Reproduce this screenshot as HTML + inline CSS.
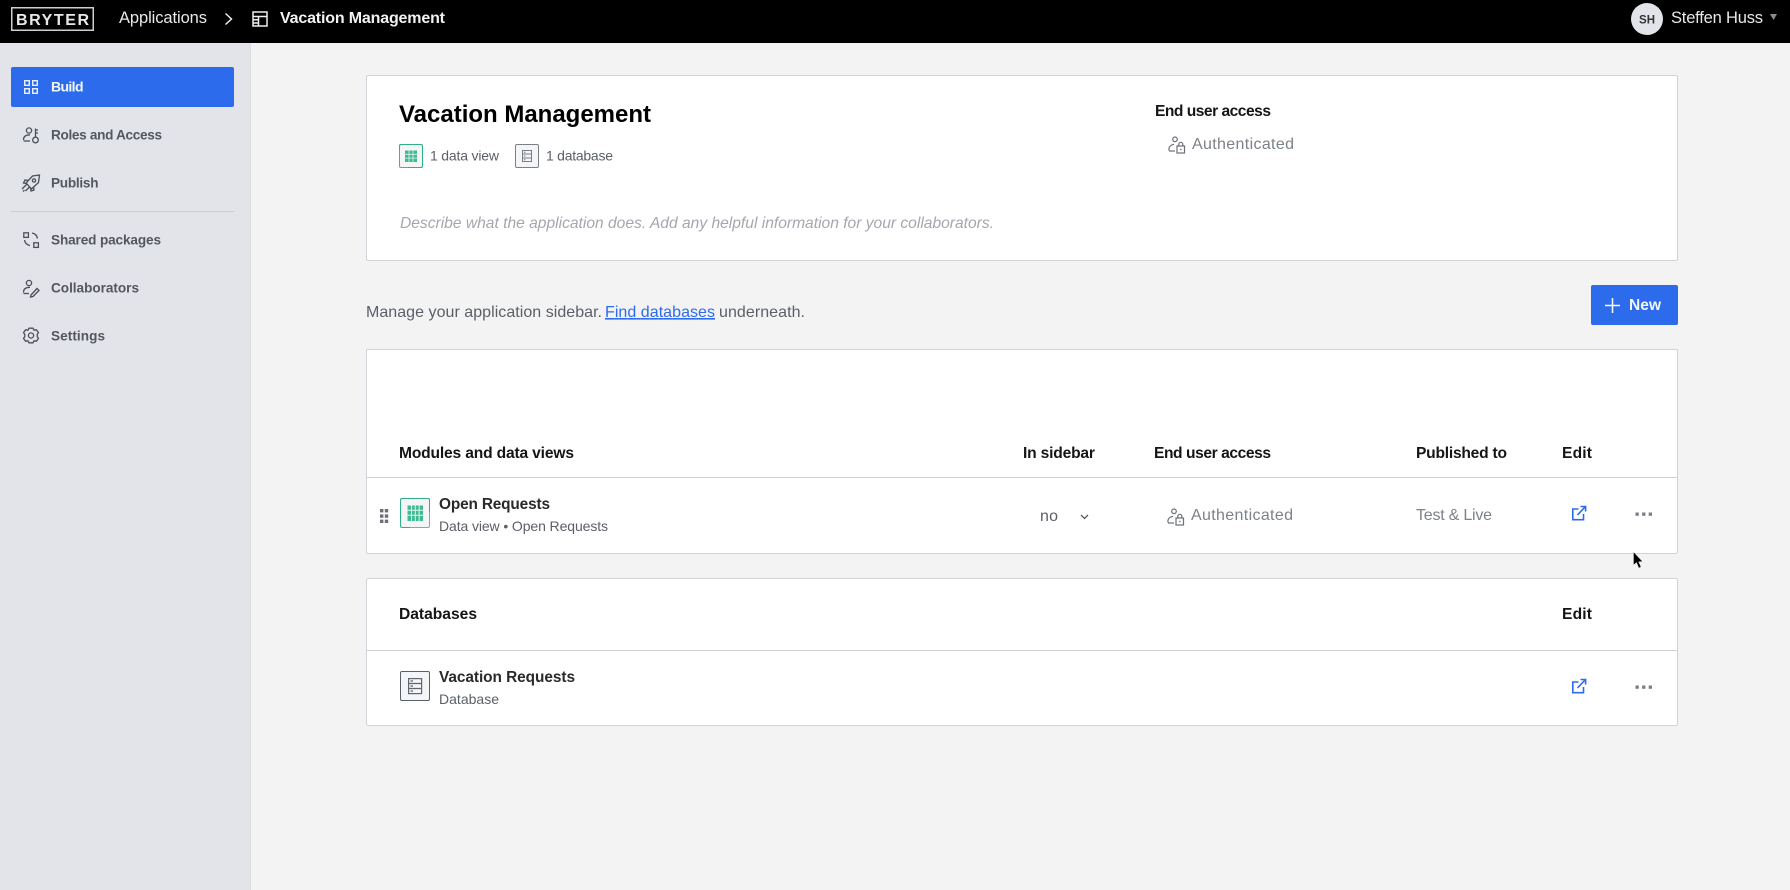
<!DOCTYPE html>
<html lang="en">
<head>
<meta charset="utf-8">
<title>Vacation Management</title>
<style>
html,body{margin:0;padding:0;width:1790px;height:890px;overflow:hidden;background:#f3f3f4}
svg{display:block;position:absolute;left:0;top:0}
text{font-family:"Liberation Sans",sans-serif;white-space:pre}
.b{font-weight:700}
.nav{font-size:13.6px;font-weight:700;fill:#53575f}
.h{font-size:15.6px;font-weight:700;fill:#151515}
.n{font-size:15.4px;font-weight:700;fill:#2a2a2a}
.s{font-size:14px;fill:#5b5f67}
.g{font-size:16px;fill:#7d8189}
.i{fill:none;stroke:#4b4f58;stroke-width:1.3}
.o{fill:none;stroke:#6b6f78;stroke-width:1.2}
.bl{fill:none;stroke:#2d6bed;stroke-width:1.6}
</style>
</head>
<body>
<svg width="1790" height="890" viewBox="0 0 1790 890" xmlns="http://www.w3.org/2000/svg">
  <defs>
    <g id="auth">
      <circle cx="7" cy="2.8" r="2.3" class="o"/>
      <path d="M1 14 C0.5 11 2 8.5 6 7.8" class="o"/>
      <path d="M1 14.5 H7" class="o"/>
      <rect x="9" y="9.5" width="7.5" height="7" class="o"/>
      <path d="M10.8 9.5 V7.8 a2 2 0 0 1 4 0 V9.5" class="o"/>
      <rect x="12.2" y="12.3" width="1.4" height="1.4" fill="#6b6f78"/>
    </g>
    <g id="ext">
      <path d="M6.5 3.5 H0.8 V14.2 H11.5 V8.5" class="bl"/>
      <path d="M5.5 9.5 L13 1.5 M8.5 1 H13.6 V6" class="bl"/>
    </g>
    <g id="dots">
      <rect x="0" y="0" width="3.3" height="3.3" fill="#7a7e86"/>
      <rect x="6.6" y="0" width="3.3" height="3.3" fill="#7a7e86"/>
      <rect x="13.2" y="0" width="3.3" height="3.3" fill="#7a7e86"/>
    </g>
  </defs>

  <!-- backgrounds -->
  <rect width="1790" height="890" fill="#f3f3f4"/>
  <rect x="0" y="43" width="250" height="847" fill="#e2e4e9"/>
  <rect x="250" y="43" width="1" height="847" fill="#dcdee2"/>
  <rect width="1790" height="43" fill="#000"/>

  <!-- top bar -->
  <rect x="11.75" y="7.75" width="81.5" height="22.5" fill="none" stroke="#cfcfcf" stroke-width="1.5"/>
  <text x="16" y="25" class="b" font-size="16" fill="#e8e8e8" textLength="73" lengthAdjust="spacing">BRYTER</text>
  <text x="119" y="23" font-size="16.5" fill="#e8e8e8" textLength="88" lengthAdjust="spacing">Applications</text>
  <path d="M225.5 13.5 L231.5 19 L225.5 24.5" fill="none" stroke="#eee" stroke-width="1.5"/>
  <g fill="none" stroke="#eee" stroke-width="1.5">
    <rect x="253" y="12" width="14" height="14"/>
    <path d="M253 16.5 H267 M258.5 16.5 V26 M253 19.7 H258.5 M253 23 H258.5"/>
  </g>
  <text x="280" y="23" class="b" font-size="16" fill="#f2f2f2" textLength="165" lengthAdjust="spacing">Vacation Management</text>
  <ellipse cx="1647" cy="19" rx="16" ry="16" fill="#e2e4e9"/>
  <text x="1639" y="23.5" class="b" font-size="11.5" fill="#333" textLength="16" lengthAdjust="spacing">SH</text>
  <text x="1671" y="23" font-size="16.5" fill="#e8e8e8" textLength="92" lengthAdjust="spacing">Steffen Huss</text>
  <path d="M1770 14 H1777 L1773.5 20 Z" fill="#8a8a8a"/>

  <!-- sidebar -->
  <rect x="11" y="67" width="223" height="40" rx="2" fill="#2d6bed"/>
  <g fill="none" stroke="#e8efff" stroke-width="1.4">
    <rect x="24.7" y="80.7" width="4.6" height="4.6"/>
    <rect x="32.7" y="80.7" width="4.6" height="4.6"/>
    <rect x="24.7" y="88.7" width="4.6" height="4.6"/>
    <rect x="32.7" y="88.7" width="4.6" height="4.6"/>
  </g>
  <text x="51" y="91.5" class="b" font-size="14" fill="#f2f6ff" textLength="32.5" lengthAdjust="spacing">Build</text>

  <g class="i">
    <circle cx="29" cy="130.5" r="2.6"/>
    <path d="M23.5 140 C23.5 136.5 26 134.8 30 134.8"/>
    <path d="M23.5 141 H30"/>
    <circle cx="35.5" cy="140" r="2.8"/>
    <path d="M35.5 137 V128.5 M35.5 130 H38 M35.5 133 H38"/>
  </g>
  <text x="51" y="139.5" class="nav" textLength="111" lengthAdjust="spacing">Roles and Access</text>

  <g class="i">
    <path d="M39.5 175 L32.5 176 L26 183 L31.5 189 L38.5 182.5 Z"/>
    <path d="M28.5 180.5 L25 180 L23.5 183 L26.5 183.5 M33.5 186.5 L34 190 L31 191 L30.5 188"/>
    <circle cx="34" cy="180.5" r="1.6"/>
    <path d="M22 189 L27 184 M25.5 191 L30 186.5 M23 191.5 L24.5 190"/>
  </g>
  <text x="51" y="187.5" class="nav" textLength="47.5" lengthAdjust="spacing">Publish</text>

  <rect x="11" y="211" width="223" height="1" fill="#ccced4"/>

  <g class="i">
    <rect x="23.8" y="232.8" width="4.6" height="4.6"/>
    <rect x="33.8" y="242.8" width="4.6" height="4.6"/>
    <path d="M32 233 C35 233.5 37 235.5 37.5 238.5 M24.5 240 C25 243 27 245 30 245.5"/>
  </g>
  <text x="51" y="244.5" class="nav" textLength="110" lengthAdjust="spacing">Shared packages</text>

  <g class="i">
    <circle cx="29" cy="283" r="2.6"/>
    <path d="M23.5 292.5 C23.5 289 26 287.3 30 287.3"/>
    <path d="M23.5 293.5 H29"/>
    <path d="M31 295 L37 288.5 L39 290.5 L33 296.5 L30.5 297 Z"/>
  </g>
  <text x="51" y="292.5" class="nav" textLength="88" lengthAdjust="spacing">Collaborators</text>

  <g class="i">
    <circle cx="31" cy="335.5" r="2.6"/>
    <path d="M29 328.2 L33 328.2 L34 330.2 L36.4 329.8 L38.5 332.6 L37.2 334.4 L37.2 336.6 L38.5 338.4 L36.4 341.2 L34 340.8 L33 342.8 L29 342.8 L28 340.8 L25.6 341.2 L23.5 338.4 L24.8 336.6 L24.8 334.4 L23.5 332.6 L25.6 329.8 L28 330.2 Z" stroke-linejoin="round"/>
  </g>
  <text x="51" y="340.5" class="nav" textLength="54" lengthAdjust="spacing">Settings</text>

  <!-- card 1 -->
  <rect x="366.5" y="75.5" width="1311" height="185" rx="1.5" fill="#fff" stroke="#d0d3d8"/>
  <text x="399" y="122" class="b" font-size="24" fill="#000" textLength="252" lengthAdjust="spacing">Vacation Management</text>

  <rect x="399.5" y="144.5" width="23" height="23" rx="1.5" fill="#f3f5f7" stroke="#8a8e96"/>
  <path d="M422.5 146 V166 A1.5 1.5 0 0 1 421 167.5 H408 M399.5 150 V146 A1.5 1.5 0 0 1 401 144.5 H421 A1.5 1.5 0 0 1 422.5 146" fill="none" stroke="#2eb086"/>
  <rect x="405" y="150.5" width="12" height="11.5" fill="#3dba90"/>
  <path d="M409 150.5 V162 M413 150.5 V162 M405 154.3 H417 M405 158.1 H417" stroke="#e0f4ec" stroke-width=".8"/>
  <text x="430" y="160.5" class="s" textLength="69" lengthAdjust="spacing">1 data view</text>

  <rect x="515.5" y="144.5" width="23" height="23" rx="1.5" fill="#f3f5f7" stroke="#7a7e86"/>
  <g fill="none" stroke="#7a7e86" stroke-width="1">
    <rect x="522.5" y="150.5" width="9" height="11"/>
    <path d="M522.5 154 H531.5 M522.5 158 H531.5 M524 152.2 H525.5 M524 156 H525.5 M524 159.8 H525.5"/>
  </g>
  <text x="546" y="160.5" class="s" textLength="67" lengthAdjust="spacing">1 database</text>

  <text x="1155" y="116" class="h" textLength="116" lengthAdjust="spacing">End user access</text>
  <use href="#auth" x="1168" y="136.5"/>
  <text x="1192" y="149" class="g" textLength="102" lengthAdjust="spacing">Authenticated</text>

  <text x="400" y="228" font-size="15.6" font-style="italic" fill="#a3a7ae" textLength="594" lengthAdjust="spacing">Describe what the application does. Add any helpful information for your collaborators.</text>

  <!-- manage row -->
  <text x="366" y="317" font-size="16" fill="#5b5f67" textLength="236" lengthAdjust="spacing">Manage your application sidebar.</text>
  <text x="605" y="317" font-size="16" fill="#2d6bed" text-decoration="underline" textLength="110" lengthAdjust="spacing">Find databases</text>
  <text x="719" y="317" font-size="16" fill="#5b5f67" textLength="86" lengthAdjust="spacing">underneath.</text>

  <rect x="1591" y="285" width="87" height="40" rx="2" fill="#2d6bed"/>
  <path d="M1612.5 298 V313 M1605 305.5 H1620" stroke="#fff" stroke-width="1.5" fill="none"/>
  <text x="1629" y="310" class="b" font-size="15.5" fill="#f2f6ff" textLength="32" lengthAdjust="spacing">New</text>

  <!-- card 2 -->
  <rect x="366.5" y="349.5" width="1311" height="204" rx="1.5" fill="#fff" stroke="#d0d3d8"/>
  <rect x="367" y="477" width="1310" height="1" fill="#d0d3d8"/>
  <text x="399" y="458" class="h" textLength="175" lengthAdjust="spacing">Modules and data views</text>
  <text x="1023" y="458" class="h" textLength="72" lengthAdjust="spacing">In sidebar</text>
  <text x="1154" y="458" class="h" textLength="117" lengthAdjust="spacing">End user access</text>
  <text x="1416" y="458" class="h" textLength="91" lengthAdjust="spacing">Published to</text>
  <text x="1562" y="458" class="h" textLength="30" lengthAdjust="spacing">Edit</text>

  <g fill="#6b6f78">
    <rect x="380" y="509" width="3.4" height="3.4"/><rect x="384.8" y="509" width="3.4" height="3.4"/>
    <rect x="380" y="514.4" width="3.4" height="3.4"/><rect x="384.8" y="514.4" width="3.4" height="3.4"/>
    <rect x="380" y="519.6" width="3.4" height="3.4"/><rect x="384.8" y="519.6" width="3.4" height="3.4"/>
  </g>
  <rect x="400.5" y="498.5" width="29" height="29" rx="1.5" fill="#f3f5f7" stroke="#9a9ea6"/>
  <path d="M400.5 525 V500 A1.5 1.5 0 0 1 402 498.5 H428 A1.5 1.5 0 0 1 429.5 500 V512 M400.5 525 A2 2 0 0 0 402 527.5 H410" fill="none" stroke="#2eb086"/>
  <rect x="407.5" y="505.5" width="15.5" height="15.5" fill="#3dba90"/>
  <path d="M411.5 505.5 V521 M415.3 505.5 V521 M419.1 505.5 V521 M407.5 510.2 H423 M407.5 515.2 H423" stroke="#e0f4ec" stroke-width="1"/>
  <text x="439" y="509" class="n" textLength="111" lengthAdjust="spacing">Open Requests</text>
  <text x="439" y="531" class="s" textLength="169" lengthAdjust="spacing">Data view • Open Requests</text>

  <text x="1040" y="521" font-size="16" fill="#5b5f67" textLength="18" lengthAdjust="spacing">no</text>
  <path d="M1081 515 L1084.5 518.5 L1088 515" fill="none" stroke="#555963" stroke-width="1.3"/>
  <use href="#auth" x="1167" y="508.5"/>
  <text x="1191" y="520" class="g" textLength="102" lengthAdjust="spacing">Authenticated</text>
  <text x="1416" y="520" class="g" textLength="76" lengthAdjust="spacing">Test &amp; Live</text>
  <use href="#ext" x="1572" y="505.5"/>
  <use href="#dots" x="1635.5" y="512.5"/>

  <!-- card 3 -->
  <rect x="366.5" y="578.5" width="1311" height="147" rx="1.5" fill="#fff" stroke="#d0d3d8"/>
  <rect x="367" y="650" width="1310" height="1" fill="#d0d3d8"/>
  <text x="399" y="619" class="h" textLength="78" lengthAdjust="spacing">Databases</text>
  <text x="1562" y="619" class="h" textLength="30" lengthAdjust="spacing">Edit</text>

  <rect x="400.5" y="671.5" width="29" height="29" rx="1.5" fill="#f3f5f7" stroke="#5b5f67"/>
  <g fill="none" stroke="#62666e" stroke-width="1.2">
    <rect x="408.6" y="678.6" width="13" height="15"/>
    <path d="M408.6 683.5 H421.6 M408.6 688.5 H421.6 M410.5 681 H413 M410.5 686 H413 M410.5 691 H413"/>
  </g>
  <text x="439" y="682" class="n" textLength="136" lengthAdjust="spacing">Vacation Requests</text>
  <text x="439" y="704" class="s" textLength="60" lengthAdjust="spacing">Database</text>
  <use href="#ext" x="1572" y="678.5"/>
  <use href="#dots" x="1635.5" y="685.5"/>

  <!-- cursor -->
  <path d="M1633.5 552 V565 L1636.5 562.5 L1638.8 568 L1641 567 L1638.7 561.8 L1642.5 561.5 Z" fill="#000" stroke="#eee" stroke-width=".4"/>
</svg>
</body>
</html>
